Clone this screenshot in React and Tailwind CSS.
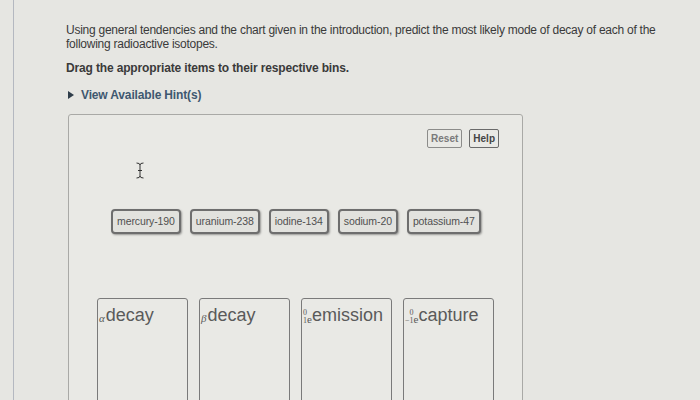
import React from "react";

const chips = ["mercury-190", "uranium-238", "iodine-134", "sodium-20", "potassium-47"];

function Nuclide({ top, bottom }) {
  return (
    <span className="inline-flex items-end" style={{ fontFamily: '"Liberation Serif", serif' }}>
      <span className="flex flex-col items-end text-[8px] leading-[8px]">
        <span>{top}</span>
        <span>{bottom}</span>
      </span>
      <span className="text-[11px] leading-[11px]">e</span>
    </span>
  );
}

function Bin({ children }) {
  return (
    <div className="h-[120px] w-[91px] rounded-[3px] border-[1.5px] border-[#7a7a7a] bg-[#e9e9e5] px-[1px] pt-[6px]">
      <div className="flex items-end text-[18px] leading-[20px] text-[#5a5a5a]">{children}</div>
    </div>
  );
}

export default function App() {
  return (
    <div
      className="h-[400px] w-[700px] overflow-hidden bg-[#e6e6e2] pl-[13px] text-[#3a3a3a]"
      style={{ fontFamily: '"Liberation Sans", Arial, sans-serif' }}
    >
      <div className="h-full border-l border-[#b4b8c0] pl-[52px] pt-[23px]">
        <p className="w-[620px] text-[12px] leading-[14px] tracking-[-0.25px]">
          Using general tendencies and the chart given in the introduction, predict the most likely mode of decay of each of the
          following radioactive isotopes.
        </p>
        <p className="mt-[10px] text-[12px] font-bold leading-[14px] tracking-[-0.15px]">
          Drag the appropriate items to their respective bins.
        </p>
        <div className="mt-[13px] flex items-center gap-[7px] pl-[2px] text-[12px] font-bold leading-[14px] tracking-[-0.15px] text-[#3e5870]">
          <svg width="6" height="8" viewBox="0 0 6 8">
            <path d="M0 0 L6 4 L0 8 Z" fill="#2f3d4a" />
          </svg>
          <span>View Available Hint(s)</span>
        </div>

        <div className="ml-[2px] mt-[12px] h-[300px] w-[455px] rounded-[3px] border border-[#a9a9a6] bg-[#e9e9e5]">
          <div className="flex justify-end gap-[7px] pr-[23px] pt-[14px]">
            <button className="h-[19px] rounded-[2px] border border-[#8c8c8a] px-[3px] text-[10px] font-bold text-[#7a7a7a]">
              Reset
            </button>
            <button className="h-[19px] rounded-[2px] border border-[#6a6a6a] px-[3px] text-[10px] font-bold text-[#444]">
              Help
            </button>
          </div>

          <div className="pl-[66px] pt-[14px]">
            <svg width="10" height="17" viewBox="0 0 10 17">
              <path d="M1.5 1 Q5 1 5 3 Q5 1 8.5 1 M5 3 V14 M1.5 16 Q5 16 5 14 Q5 16 8.5 16 M3 8.5 H7" stroke="#333" strokeWidth="1" fill="none" />
            </svg>
          </div>

          <div className="flex gap-[9px] pl-[42px] pt-[30px]">
            {chips.map((c) => (
              <div
                key={c}
                className="flex h-[25px] items-center rounded-[4px] border-2 border-[#6e6e6e] bg-[#e2e2de] px-[4px] text-[10.5px] tracking-[-0.1px] text-[#505050] shadow-[1px_1px_2px_rgba(0,0,0,0.35)]"
              >
                {c}
              </div>
            ))}
          </div>

          <div className="flex gap-[11px] pl-[28px] pt-[64px]">
            <Bin>
              <span className="text-[11px] leading-[14px]" style={{ fontFamily: '"Liberation Serif", serif', fontStyle: "italic" }}>α</span>
              <span className="ml-[1px]">decay</span>
            </Bin>
            <Bin>
              <span className="text-[11px] leading-[14px]" style={{ fontFamily: '"Liberation Serif", serif', fontStyle: "italic" }}>β</span>
              <span className="ml-[1px]">decay</span>
            </Bin>
            <Bin>
              <Nuclide top="0" bottom="1" />
              <span>emission</span>
            </Bin>
            <Bin>
              <Nuclide top="0" bottom="−1" />
              <span>capture</span>
            </Bin>
          </div>
        </div>
      </div>
    </div>
  );
}
